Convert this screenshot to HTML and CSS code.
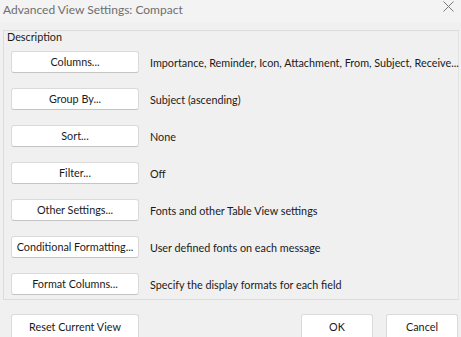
FILE: index.html
```html
<!DOCTYPE html>
<html lang="en">
<head>
    <meta charset="UTF-8">
    <title>Advanced View Settings: Compact</title>
    <link rel="stylesheet" href="styles.css">
</head>
<body>
    <div class="dialog">
        <div class="titlebar">
            <span class="title">Advanced View Settings: Compact</span>
            <svg class="close" width="11" height="11" viewBox="0 0 11 11">
                <path d="M0.5 0.5 L10.5 10.5 M10.5 0.5 L0.5 10.5" stroke="#7a7a7a" stroke-width="1" fill="none"/>
            </svg>
        </div>

        <div class="group">
            <div class="legend">Description</div>

            <div class="row">
                <button class="btn btn-wide">Columns...</button>
                <span class="desc">Importance, Reminder, Icon, Attachment, From, Subject, Receive...</span>
            </div>
            <div class="row">
                <button class="btn btn-wide">Group By...</button>
                <span class="desc">Subject (ascending)</span>
            </div>
            <div class="row">
                <button class="btn btn-wide">Sort...</button>
                <span class="desc">None</span>
            </div>
            <div class="row">
                <button class="btn btn-wide">Filter...</button>
                <span class="desc">Off</span>
            </div>
            <div class="row">
                <button class="btn btn-wide">Other Settings...</button>
                <span class="desc">Fonts and other Table View settings</span>
            </div>
            <div class="row">
                <button class="btn btn-wide">Conditional Formatting...</button>
                <span class="desc">User defined fonts on each message</span>
            </div>
            <div class="row">
                <button class="btn btn-wide">Format Columns...</button>
                <span class="desc">Specify the display formats for each field</span>
            </div>
        </div>

        <div class="footer">
            <button class="btn btn-wide">Reset Current View</button>
            <div class="actions">
                <button class="btn btn-small">OK</button>
                <button class="btn btn-small">Cancel</button>
            </div>
        </div>
    </div>
</body>
</html>
```

FILE: styles.css
```css
/* General page */
body {
    margin: 0;
    padding: 0;
    background-color: #f0f0f0;
    font-family: Lato, "Noto Sans", Arial, sans-serif;
    font-size: 10.8px;
    color: #1a1a1a;
    overflow: hidden;
}

.dialog {
    width: 461px;
    height: 337px;
    overflow: hidden;
}

/* Title bar */
.titlebar {
    height: 22px;
    display: flex;
    align-items: center;
    justify-content: space-between;
    padding: 0 7px 0 3px;
    background-color: #f3f3f3;
}

.title {
    font-size: 12px;
    color: #6e6e6e;
    margin-top: -3px;
}

.close {
    margin-top: -9px;
}

/* Description group */
.group {
    margin: 8px 2px 0 3px;
    border: 1px solid #dcdcdc;
    border-right-color: #e3e3e3;
    padding: 0 0 4px 7px;
}

.legend {
    height: 20px;
    line-height: 12px;
    margin-left: -4px;
}

.row {
    display: flex;
    align-items: center;
    gap: 11px;
    margin-bottom: 15px;
}

.row:last-child {
    margin-bottom: 0;
}

/* Buttons */
.btn {
    font-family: inherit;
    font-size: 10.8px;
    color: #1a1a1a;
    background-color: #fff;
    border: 1px solid #dadada;
    border-bottom-color: #c4c4c4;
    border-radius: 3px;
    height: 22px;
    padding: 0;
    line-height: 18px;
    white-space: nowrap;
    flex-shrink: 0;
}

.btn-wide {
    width: 128px;
}

.btn-small {
    width: 72px;
}

.desc {
    white-space: nowrap;
}

/* Footer buttons */
.footer {
    display: flex;
    justify-content: space-between;
    padding: 14px 3px 0 11px;
}

.footer .btn {
    height: 26px;
}

.actions {
    display: flex;
    gap: 13px;
}
```
